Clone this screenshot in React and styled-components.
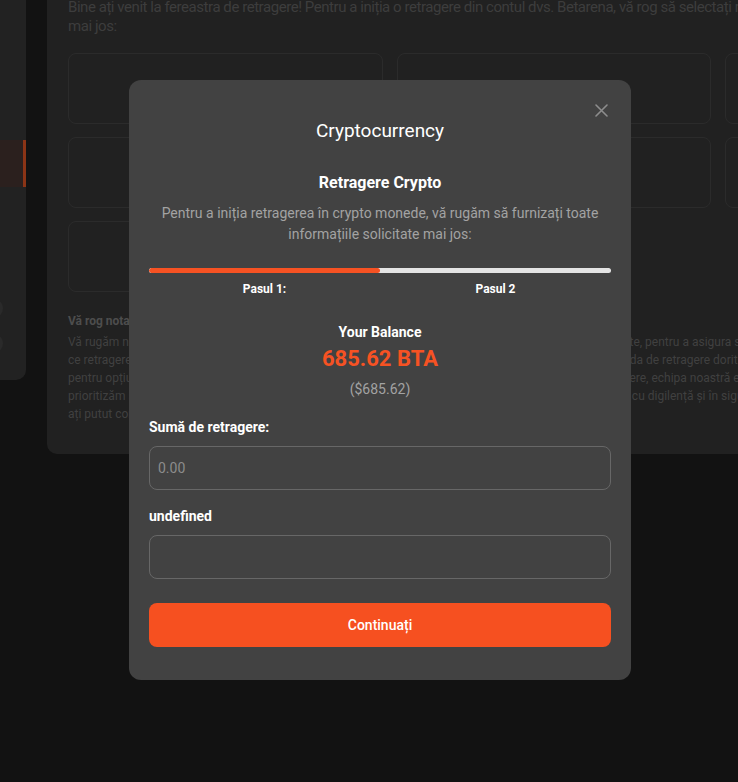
import React from "react";
import styled, { createGlobalStyle } from "styled-components";

const Global = createGlobalStyle`
  html, body { margin: 0; padding: 0; background: #121212; overflow: hidden; }
  body { font-family: Roboto, "Noto Sans", Arial, sans-serif; }
  * { box-sizing: border-box; }
`;

const Page = styled.div`
  display: flex;
  align-items: flex-start;
  gap: 21px;
  width: 738px;
  height: 782px;
  overflow: hidden;
`;

const Sidebar = styled.aside`
  flex: 0 0 200px;
  margin-left: -174px;
  height: 380px;
  background: #222222;
  border-radius: 0 0 10px 10px;
  display: flex;
  flex-direction: column;
  padding-top: 140px;
`;

const NavItem = styled.div`
  height: 47px;
  background: ${(p) => (p.$active ? "#2b201e" : "transparent")};
  border-right: 3px solid ${(p) => (p.$active ? "#8b3416" : "transparent")};
`;

const RoundRow = styled.div`
  display: flex;
  padding-left: 156px;
  margin-top: ${(p) => p.$mt}px;
`;

const RoundBtn = styled.div`
  width: 21px;
  height: 21px;
  border-radius: 50%;
  background: #2a2a2a;
`;

const Main = styled.main`
  flex: 0 0 1100px;
  margin-top: -20px;
  background: #212121;
  border-radius: 10px;
  padding: 18px 21px 31px;
`;

const Intro = styled.p`
  margin: 0;
  font-size: 15px;
  line-height: 19px;
  color: #3d3d3d;
  letter-spacing: -0.45px;
  white-space: nowrap;
`;

const CardGrid = styled.div`
  display: grid;
  grid-template-columns: 315px 314px 315px;
  grid-auto-rows: 71px;
  column-gap: 14px;
  row-gap: 13px;
  margin-top: 17px;
`;

const Card = styled.div`
  border: 1px solid #2b2b2b;
  border-radius: 8px;
`;

const NoteTitle = styled.h4`
  margin: 20px 0 0;
  font-size: 12px;
  line-height: 18px;
  font-weight: 700;
  color: #4d4d4d;
`;

const NoteText = styled.p`
  margin: 3px 0 0;
  font-size: 12px;
  line-height: 18px;
  color: #404040;
  white-space: nowrap;
`;

const Overlay = styled.div`
  position: fixed;
  inset: 0;
  display: flex;
  align-items: center;
  justify-content: center;
  padding: 0 0 22px 22px;
`;

const Modal = styled.div`
  position: relative;
  width: 502px;
  background: #424242;
  border-radius: 12px;
  padding: 38px 20px 33px;
  display: flex;
  flex-direction: column;
`;

const Close = styled.button`
  position: absolute;
  top: 23px;
  right: 23px;
  width: 14px;
  height: 14px;
  padding: 0;
  border: 0;
  background: transparent;
  display: flex;
  align-items: center;
  justify-content: center;
`;

const Title = styled.h2`
  margin: 0;
  text-align: center;
  font-size: 19px;
  line-height: 26px;
  font-weight: 400;
  color: #ffffff;
`;

const Subtitle = styled.h3`
  margin: 28px 0 0;
  text-align: center;
  font-size: 16px;
  line-height: 22px;
  font-weight: 700;
  color: #ffffff;
`;

const Desc = styled.p`
  margin: 9px 0 0;
  text-align: center;
  font-size: 14px;
  line-height: 21px;
  color: #a3a3a3;
  padding: 0 10px;
`;

const Track = styled.div`
  margin-top: 23px;
  height: 5px;
  border-radius: 3px;
  background: #e4e4e4;
  overflow: hidden;
`;

const Fill = styled.div`
  height: 100%;
  background: #f65223;
  border-radius: 3px;
`;

const Steps = styled.div`
  display: grid;
  grid-template-columns: 1fr 1fr;
  margin-top: 8px;
`;

const Step = styled.span`
  text-align: center;
  font-size: 12px;
  line-height: 16px;
  font-weight: 700;
  color: #ffffff;
`;

const BalanceLabel = styled.div`
  margin-top: 26px;
  text-align: center;
  font-size: 14px;
  line-height: 18px;
  font-weight: 700;
  color: #ffffff;
`;

const BalanceValue = styled.div`
  margin-top: 4px;
  text-align: center;
  font-size: 22px;
  line-height: 28px;
  font-weight: 700;
  color: #f65223;
`;

const BalanceUsd = styled.div`
  margin-top: 7px;
  text-align: center;
  font-size: 14px;
  line-height: 18px;
  color: #a3a3a3;
`;

const FieldLabel = styled.label`
  margin-top: ${(p) => p.$mt}px;
  font-size: 14px;
  line-height: 18px;
  font-weight: 700;
  color: #ffffff;
`;

const Input = styled.input`
  margin-top: 10px;
  height: 44px;
  width: 100%;
  border: 1px solid #676767;
  border-radius: 8px;
  background: transparent;
  padding: 0 8px;
  font-family: Roboto, Arial, sans-serif;
  font-size: 14px;
  color: #ffffff;
  outline: none;
  &::placeholder { color: #8c8c8c; }
`;

const Button = styled.button`
  margin-top: 24px;
  height: 44px;
  border: 0;
  border-radius: 8px;
  background: #f65020;
  color: #ffffff;
  font-family: Roboto, Arial, sans-serif;
  font-size: 14px;
  font-weight: 500;
`;

export default function App() {
  return (
    <>
      <Global />
      <Page>
        <Sidebar>
          <NavItem $active />
          <RoundRow $mt={111}>
            <RoundBtn />
          </RoundRow>
          <RoundRow $mt={14}>
            <RoundBtn />
          </RoundRow>
        </Sidebar>
        <Main>
          <Intro>
            Bine ați venit la fereastra de retragere! Pentru a iniția o retragere din contul dvs. Betarena, vă rog să selectați metoda dorită
            <br />
            mai jos:
          </Intro>
          <CardGrid>
            <Card />
            <Card />
            <Card />
            <Card />
            <Card />
            <Card />
            <Card />
          </CardGrid>
          <NoteTitle>Vă rog notați:</NoteTitle>
          <NoteText>
            Vă rugăm notați că toate cererile de retragere sunt verificate manual de echipa noastră internă de securitate, pentru a asigura siguranța fondurilor.
            <br />
            ce retragerea nu poate fi anulată ulterior odată aprobată. Vă rugăm să verificați cu atenție că ați ales metoda de retragere dorită corect.
            <br />
            pentru opțiunile de plată disponibile în țara dumneavoastră. În cazul în care întâmpinați probleme la retragere, echipa noastră este aici să vă ajute.
            <br />
            prioritizăm securitatea și transparența în toate tranzacțiile noastre, astfel încât fiecare cerere să fie tratată cu digilență și în siguranță deplină.
            <br />
            ați putut contacta echipa de suport oricând pentru întrebări suplimentare.
          </NoteText>
        </Main>
      </Page>
      <Overlay>
        <Modal>
          <Close aria-label="Închide">
            <svg width="13" height="13" viewBox="0 0 13 13">
              <path d="M1 1L12 12M12 1L1 12" stroke="#8d8d8d" strokeWidth="1.6" strokeLinecap="round" />
            </svg>
          </Close>
          <Title>Cryptocurrency</Title>
          <Subtitle>Retragere Crypto</Subtitle>
          <Desc>
            Pentru a iniția retragerea în crypto monede, vă rugăm să furnizați toate informațiile solicitate mai jos:
          </Desc>
          <Track>
            <Fill style={{ width: "50%" }} />
          </Track>
          <Steps>
            <Step>Pasul 1:</Step>
            <Step>Pasul 2</Step>
          </Steps>
          <BalanceLabel>Your Balance</BalanceLabel>
          <BalanceValue>685.62 BTA</BalanceValue>
          <BalanceUsd>($685.62)</BalanceUsd>
          <FieldLabel $mt={20}>Sumă de retragere:</FieldLabel>
          <Input placeholder="0.00" />
          <FieldLabel $mt={17}>undefined</FieldLabel>
          <Input />
          <Button>Continuați</Button>
        </Modal>
      </Overlay>
    </>
  );
}
